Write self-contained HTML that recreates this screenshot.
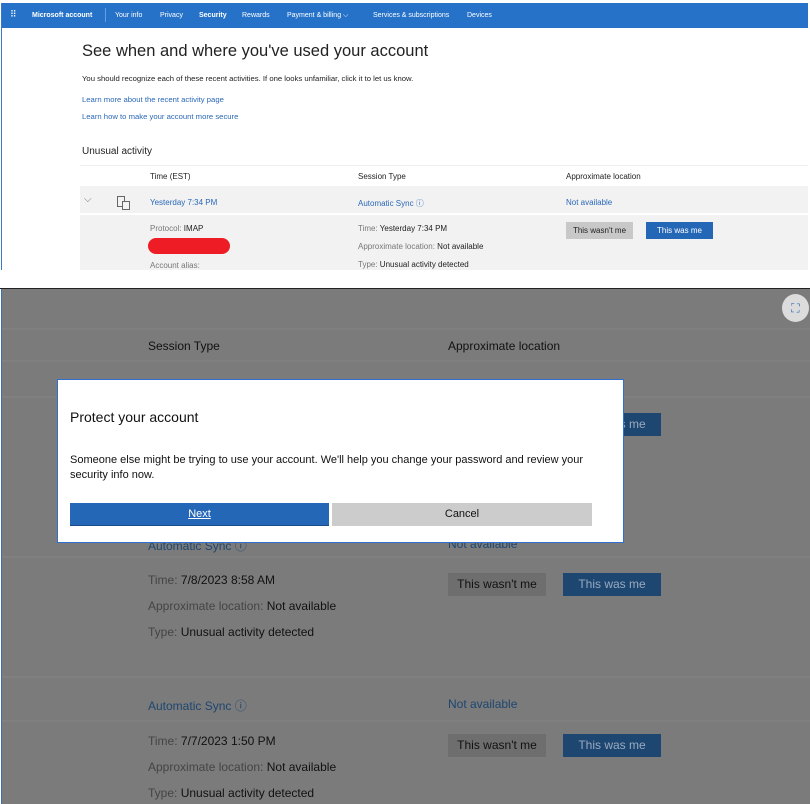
<!DOCTYPE html>
<html><head><meta charset="utf-8"><style>
*{margin:0;padding:0;box-sizing:border-box}
body{width:810px;height:804px;background:#fff;position:relative;overflow:hidden;font-family:"Liberation Sans",sans-serif}
.a{position:absolute;white-space:nowrap}
.nav{position:absolute;left:2px;top:3px;width:806px;height:25px;background:#2672c8;color:#fff;font-size:7px}
.nav span{position:absolute;top:9px}
.lnk{color:#2a68b8}
.g{background:#7b7b7b}
.t{font-size:8px}
</style></head><body>
<!-- top screenshot -->
<div class="a" style="left:1px;top:3px;width:1px;height:267px;background:#3a78c8"></div>
<div class="nav">
<span style="left:8px;font-size:9px;top:6px">⠿</span>
<span style="left:30px;font-weight:bold">Microsoft account</span>
<span style="left:103px;top:5px;width:1px;height:14px;background:#6b9be0"></span>
<span style="left:113px">Your info</span><span style="left:158px">Privacy</span>
<span style="left:197px;font-weight:bold">Security</span><span style="left:240px">Rewards</span>
<span style="left:285px">Payment &amp; billing ⌵</span><span style="left:371px">Services &amp; subscriptions</span><span style="left:465px">Devices</span>
</div>
<div class="a" style="left:82px;top:42px;font-size:16.5px;color:#222">See when and where you've used your account</div>
<div class="a" style="left:82px;top:74px;font-size:7.7px;color:#222">You should recognize each of these recent activities. If one looks unfamiliar, click it to let us know.</div>
<div class="a lnk" style="left:82px;top:95px;font-size:7.7px">Learn more about the recent activity page</div>
<div class="a lnk" style="left:82px;top:112px;font-size:7.7px">Learn how to make your account more secure</div>
<div class="a" style="left:82px;top:146px;font-size:10px;color:#222">Unusual activity</div>
<div class="a" style="left:80px;top:165px;width:728px;height:1px;background:#eee"></div>
<div class="a t" style="left:150px;top:172px;color:#222">Time (EST)</div>
<div class="a t" style="left:358px;top:172px;color:#222">Session Type</div>
<div class="a t" style="left:566px;top:172px;color:#222">Approximate location</div>
<div class="a" style="left:80px;top:186px;width:728px;height:27px;background:#f2f2f2"></div>
<div class="a" style="left:84px;top:194px;font-size:10px;color:#777">⌵</div>
<div class="a" style="left:117px;top:196px;width:8px;height:11px;border:1px solid #666"></div>
<div class="a" style="left:122px;top:201px;width:8px;height:9px;border:1px solid #666;background:#f2f2f2"></div>
<div class="a lnk t" style="left:150px;top:198px">Yesterday 7:34 PM</div>
<div class="a lnk t" style="left:358px;top:198px">Automatic Sync ⓘ</div>
<div class="a lnk t" style="left:566px;top:198px">Not available</div>
<div class="a" style="left:80px;top:215px;width:728px;height:55px;background:#f2f2f2"></div>
<div class="a t" style="left:150px;top:224px;color:#222"><span style="color:#777">Protocol:</span> IMAP</div>
<div class="a" style="left:148px;top:238px;width:82px;height:16px;border-radius:8px;background:#ee1c25"></div>
<div class="a t" style="left:150px;top:261px;color:#777">Account alias:</div>
<div class="a t" style="left:358px;top:224px;color:#222"><span style="color:#777">Time:</span> Yesterday 7:34 PM</div>
<div class="a t" style="left:358px;top:242px;color:#222"><span style="color:#777">Approximate location:</span> Not available</div>
<div class="a t" style="left:358px;top:260px;color:#222"><span style="color:#777">Type:</span> Unusual activity detected</div>
<div class="a t" style="left:566px;top:222px;width:67px;height:17px;background:#c8c8c8;text-align:center;line-height:17px;color:#222">This wasn't me</div>
<div class="a t" style="left:646px;top:222px;width:67px;height:17px;background:#2567b7;text-align:center;line-height:17px;color:#fff">This was me</div>
<!-- bottom screenshot -->
<div class="a" style="left:0;top:288px;width:810px;height:1px;background:#222"></div>
<div class="a g" style="left:1px;top:289px;width:809px;height:515px;border-left:1px solid #3a6fb0"></div>
<div class="a" style="left:2px;top:328px;width:808px;height:2px;background:#808080"></div>
<div class="a" style="left:2px;top:360px;width:808px;height:2px;background:#808080"></div>
<div class="a" style="left:2px;top:396px;width:808px;height:2px;background:#808080"></div>
<div class="a" style="left:2px;top:556px;width:808px;height:2px;background:#808080"></div>
<div class="a" style="left:2px;top:676px;width:808px;height:2px;background:#808080"></div>
<div class="a" style="left:2px;top:720px;width:808px;height:2px;background:#808080"></div>
<div class="a" style="left:782px;top:294px;width:27px;height:28px;border-radius:50%;background:#dcdcdc;color:#3a6fb0;font-size:12px;text-align:center;line-height:28px">⛶</div>
<div class="a" style="left:148px;top:339px;font-size:12px;color:#111">Session Type</div>
<div class="a" style="left:448px;top:339px;font-size:12px;color:#111">Approximate location</div>
<div class="a" style="left:563px;top:413px;width:98px;height:23px;background:#1d4670;color:#9aaac0;font-size:12px;line-height:23px;text-align:center">This was me</div>
<div class="a" style="left:148px;top:537px;font-size:12px;color:#1d4670">Automatic Sync ⓘ</div>
<div class="a" style="left:448px;top:537px;font-size:12px;color:#1d4670">Not available</div>
<div class="a" style="left:148px;top:573px;font-size:12px;color:#111"><span style="color:#444">Time:</span> 7/8/2023 8:58 AM</div>
<div class="a" style="left:148px;top:599px;font-size:12px;color:#111"><span style="color:#444">Approximate location:</span> Not available</div>
<div class="a" style="left:148px;top:625px;font-size:12px;color:#111"><span style="color:#444">Type:</span> Unusual activity detected</div>
<div class="a" style="left:448px;top:573px;width:98px;height:23px;background:#6e6e6e;color:#111;font-size:12px;line-height:23px;text-align:center">This wasn't me</div>
<div class="a" style="left:563px;top:573px;width:98px;height:23px;background:#1d4670;color:#9aaac0;font-size:12px;line-height:23px;text-align:center">This was me</div>
<div class="a" style="left:148px;top:697px;font-size:12px;color:#1d4670">Automatic Sync ⓘ</div>
<div class="a" style="left:448px;top:697px;font-size:12px;color:#1d4670">Not available</div>
<div class="a" style="left:148px;top:734px;font-size:12px;color:#111"><span style="color:#444">Time:</span> 7/7/2023 1:50 PM</div>
<div class="a" style="left:148px;top:760px;font-size:12px;color:#111"><span style="color:#444">Approximate location:</span> Not available</div>
<div class="a" style="left:148px;top:786px;font-size:12px;color:#111"><span style="color:#444">Type:</span> Unusual activity detected</div>
<div class="a" style="left:448px;top:734px;width:98px;height:23px;background:#6e6e6e;color:#111;font-size:12px;line-height:23px;text-align:center">This wasn't me</div>
<div class="a" style="left:563px;top:734px;width:98px;height:23px;background:#1d4670;color:#9aaac0;font-size:12px;line-height:23px;text-align:center">This was me</div>
<!-- modal -->
<div class="a" style="left:57px;top:379px;width:567px;height:164px;background:#fff;border:1px solid #2f6fd0"></div>
<div class="a" style="left:70px;top:409px;font-size:14px;color:#111">Protect your account</div>
<div class="a" style="left:70px;top:453px;font-size:11px;color:#111;line-height:15px;white-space:normal;width:530px">Someone else might be trying to use your account. We'll help you change your password and review your security info now.</div>
<div class="a" style="left:70px;top:503px;width:259px;height:23px;background:#2567b7;border-bottom:1px solid #1a4a8a;color:#fff;font-size:11px;line-height:23px;text-align:center;text-decoration:underline">Next</div>
<div class="a" style="left:332px;top:503px;width:260px;height:23px;background:#cccccc;color:#111;font-size:11px;line-height:23px;text-align:center">Cancel</div>
</body></html>
